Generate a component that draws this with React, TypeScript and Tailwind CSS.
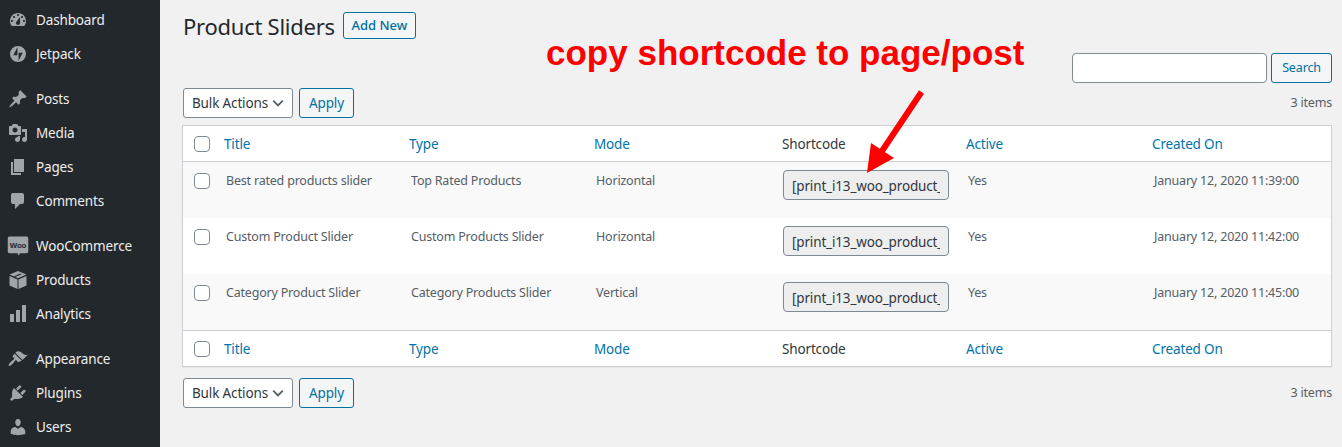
const FONT = "font-['Noto_Sans',sans-serif]"

const ICONS: Record<string, string> = {
  dashboard:
    'M3.76 16h12.48c1.1-1.37 1.76-3.11 1.76-5 0-4.42-3.58-8-8-8s-8 3.58-8 8c0 1.89.66 3.63 1.76 5zM10 4c.55 0 1 .45 1 1s-.45 1-1 1-1-.45-1-1 .45-1 1-1zM6 6c.55 0 1 .45 1 1s-.45 1-1 1-1-.45-1-1 .45-1 1-1zm8 0c.55 0 1 .45 1 1s-.45 1-1 1-1-.45-1-1 .45-1 1-1zm-5.37 5.55L12 7v6c0 1.1-.9 2-2 2s-2-.9-2-2c0-.57.24-1.08.63-1.45zM4 10c.55 0 1 .45 1 1s-.45 1-1 1-1-.45-1-1 .45-1 1-1zm12 0c.55 0 1 .45 1 1s-.45 1-1 1-1-.45-1-1 .45-1 1-1z',
  jetpack:
    'M10 2a8 8 0 1 0 0 16 8 8 0 0 0 0-16zM9.4 11.2H5.3l4.1-7.9v7.9zm1.2 5.5V8.8h4.1l-4.1 7.9z',
  posts:
    'M10.44 3.02l1.82-1.82 6.36 6.35-1.83 1.82c-1.05-.68-2.48-.57-3.41.36l-.75.75c-.92.93-1.04 2.35-.35 3.41l-1.83 1.82-2.41-2.41-2.8 2.79c-.42.42-3.38 2.71-3.8 2.29s1.86-3.39 2.28-3.81l2.79-2.79L4.1 9.36l1.83-1.82c1.05.69 2.48.57 3.41-.36l.75-.75c.93-.92 1.04-2.35.35-3.41z',
  media:
    'M13 11V4c0-.55-.45-1-1-1h-1.67L9 1H5L3.67 3H2c-.55 0-1 .45-1 1v7c0 .55.45 1 1 1h10c.55 0 1-.45 1-1zM7 4.5c1.38 0 2.5 1.12 2.5 2.5S8.38 9.5 7 9.5 4.5 8.38 4.5 7 5.62 4.5 7 4.5zM14 6h5v10.5c0 1.38-1.12 2.5-2.5 2.5S14 17.88 14 16.5s1.12-2.5 2.5-2.5c.17 0 .34.02.5.05V9h-3V6zm-4 8.05V13h2v3.5c0 1.38-1.12 2.5-2.5 2.5S7 17.88 7 16.5 8.12 14 9.5 14c.17 0 .34.02.5.05z',
  pages: 'M6 15V2h10v13H6zm-1 1h8v2H3V5h2v11z',
  comments:
    'M5 2h9c1.1 0 2 .9 2 2v7c0 1.1-.9 2-2 2h-2l-5 5v-5H5c-1.1 0-2-.9-2-2V4c0-1.1.9-2 2-2z',
  products:
    'M10 1l8.5 3.6L10 8.3 7.2 7.1l6.3-2.9-1.3-.6-6.3 2.9-4.4-1.9L10 1zM1.5 6l8 3.5V19l-8-3.6V6zm17 0v9.4l-8 3.6V9.5l8-3.5z',
  analytics: 'M2 10h4v8H2v-8zm6-4h4v12H8V6zm6-5h4v17h-4V1z',
  appearance:
    'M14.48 11.06L7.41 3.99l1.5-1.5c.5-.56 2.3-.47 3.51.32 1.21.8 1.43 1.28 2.91 2.1 1.18.64 2.45 1.26 4.45.85zm-.71.71L6.7 4.7 4.93 6.47c-.39.39-.39 1.02 0 1.41l1.06 1.06c.39.39.39 1.03 0 1.42-.6.6-1.43 1.11-2.21 1.69-.35.26-.7.53-1.01.84-1.43 1.43-2.6 3.1-1.9 3.8s2.37-.47 3.8-1.9c.31-.31.58-.66.84-1.01.58-.78 1.09-1.61 1.69-2.21.39-.39 1.03-.39 1.42 0l1.06 1.06c.39.39 1.02.39 1.41 0z',
  plugins:
    'M13.11 4.36L9.87 7.6 8 5.73l3.24-3.24c.35-.34 1.05-.2 1.56.32.52.51.66 1.21.31 1.55zm-8 1.77l.91-1.12 9.01 9.01-1.19.84c-.71.71-2.63 1.16-3.82 1.16H6.14L4.9 17.26c-.59.59-1.54.59-2.12 0-.59-.58-.59-1.53 0-2.12l1.24-1.24v-3.88c0-1.13.4-3.19 1.09-3.89zm7.26 3.97l3.24-3.24c.34-.35 1.04-.21 1.55.31.52.51.66 1.21.31 1.55l-3.24 3.25z',
  users:
    'M10 9.25c-2.27 0-2.73-3.44-2.73-3.44C7 4.02 7.82 2 9.97 2c2.16 0 2.98 2.02 2.71 3.81 0 0-.41 3.44-2.68 3.44zm0 2.57L12.72 10c2.39 0 4.52 2.33 4.52 4.53v2.49s-3.65 1.13-7.24 1.13c-3.65 0-7.24-1.13-7.24-1.13v-2.49c0-2.25 1.94-4.48 4.47-4.48z',
}

const MENU = [
  [
    ['dashboard', 'Dashboard'],
    ['jetpack', 'Jetpack'],
  ],
  [
    ['posts', 'Posts'],
    ['media', 'Media'],
    ['pages', 'Pages'],
    ['comments', 'Comments'],
  ],
  [
    ['woo', 'WooCommerce'],
    ['products', 'Products'],
    ['analytics', 'Analytics'],
  ],
  [
    ['appearance', 'Appearance'],
    ['plugins', 'Plugins'],
    ['users', 'Users'],
  ],
]

const ROWS = [
  ['Best rated products slider', 'Top Rated Products', 'Horizontal', 'January 12, 2020 11:39:00'],
  ['Custom Product Slider', 'Custom Products Slider', 'Horizontal', 'January 12, 2020 11:42:00'],
  ['Category Product Slider', 'Category Products Slider', 'Vertical', 'January 12, 2020 11:45:00'],
]

const GRID = 'grid grid-cols-[31px_185px_185px_188px_184px_186px_1fr]'

function MenuIcon({ name }: { name: string }) {
  if (name === 'woo') {
    return (
      <svg viewBox="0 0 20 20" className="h-5 w-5 shrink-0 scale-[1.05]">
        <path d="M2 1h16a2 2 0 0 1 2 2v12a2 2 0 0 1-2 2h-6l-1.5 2-1-2H2a2 2 0 0 1-2-2V3a2 2 0 0 1 2-2z" fill="#a0a5aa" />
        <text x="10" y="11.5" textAnchor="middle" fontSize="7.5" fontWeight="700" fill="#23282d" fontFamily="Liberation Sans, sans-serif">
          Woo
        </text>
      </svg>
    )
  }
  return (
    <svg viewBox="0 0 20 20" className="h-5 w-5 shrink-0 fill-[#a0a5aa]">
      <path d={ICONS[name]} fillRule={name === 'jetpack' ? 'evenodd' : undefined} />
    </svg>
  )
}

function Sidebar() {
  return (
    <aside className="flex h-[447px] w-[160px] shrink-0 flex-col gap-[11px] overflow-hidden bg-[#23282d] pt-[3px]">
      {MENU.map((group, i) => (
        <div key={i}>
          {group.map(([icon, label]) => (
            <div key={label} className="flex h-[34px] items-center gap-[8px] pl-[8px] text-[13.5px] tracking-[-0.15px] text-[#eeeeee]">
              <MenuIcon name={icon} />
              <span>{label}</span>
            </div>
          ))}
        </div>
      ))}
    </aside>
  )
}

function Checkbox() {
  return <span className="block h-4 w-4 rounded-[4px] border border-[#7e8993] bg-white" />
}

function BulkBar() {
  return (
    <div className="ml-px flex items-center gap-[6px]">
      <div className="flex h-[30px] w-[110px] items-center justify-between rounded-[3px] border border-[#7e8993] bg-white pl-[8px] pr-[6px] text-[13.5px] tracking-[-0.15px] whitespace-nowrap text-[#32373c]">
        <span>Bulk Actions</span>
        <svg viewBox="0 0 20 20" className="h-4 w-4 fill-none stroke-[#555d66] stroke-[2.2]">
          <path d="M4 7l6 6 6-6" />
        </svg>
      </div>
      <div className="flex h-[30px] w-[55px] items-center justify-center rounded-[3px] border border-[#0071a1] bg-[#f3f5f6] text-[13.5px] tracking-[-0.15px] text-[#0071a1]">
        Apply
      </div>
    </div>
  )
}

function HeadRow({ className }: { className: string }) {
  const link = 'pl-[10px] pt-px text-[#0073aa]'
  return (
    <div className={`${GRID} h-[36px] items-center bg-white text-[13.5px] tracking-[-0.15px] ${className}`}>
      <div className="pl-[11px]">
        <Checkbox />
      </div>
      <div className={link}>Title</div>
      <div className={link}>Type</div>
      <div className={link}>Mode</div>
      <div className="pl-[10px] pt-px text-[#32373c]">Shortcode</div>
      <div className={link}>Active</div>
      <div className={link}>Created On</div>
    </div>
  )
}

export default function App() {
  return (
    <div className={`relative flex h-[447px] w-[1342px] overflow-hidden bg-[#f1f1f1] ${FONT}`}>
      <Sidebar />
      <main className="min-w-0 flex-1 pl-[22px] pr-[10px]">
        <div className="flex h-[53px] items-center gap-[8px]">
          <h1 className="mb-[2px] pl-px text-[22px] leading-none tracking-[-0.25px] text-[#23282d]">Product Sliders</h1>
          <div className="mb-[2px] flex h-[27px] w-[73px] items-center justify-center rounded-[3px] border border-[#0071a1] bg-[#f3f5f6] text-[13px] font-medium text-[#0071a1]">
            Add New
          </div>
        </div>
        <div className="flex h-[30px] justify-end gap-[4px]">
          <div className="h-[30px] w-[195px] rounded-[4px] border border-[#7e8993] bg-white" />
          <div className="flex h-[30px] w-[61px] items-center justify-center rounded-[3px] border border-[#0071a1] bg-[#f3f5f6] pt-px text-[12.5px] tracking-[-0.15px] text-[#0071a1]">
            Search
          </div>
        </div>
        <div className="mt-[4px] flex h-[32px] items-center justify-between">
          <BulkBar />
          <span className="text-[12.5px] tracking-[-0.2px] text-[#555d66]">3 items</span>
        </div>
        <div className="mt-[6px] border border-[#ccd0d4] bg-white shadow-[0_1px_1px_rgba(0,0,0,0.04)]">
          <HeadRow className="border-b border-[#ccd0d4]" />
          {ROWS.map((row, i) => (
            <div
              key={row[0]}
              className={`${GRID} h-[56px] text-[12.5px] tracking-[-0.2px] text-[#555d66] ${i % 2 === 0 ? 'bg-[#f9f9f9]' : 'bg-white'}`}
            >
              <div className="pl-[11px] pt-[11px]">
                <Checkbox />
              </div>
              <div className="pl-[12px] pt-[10px]">{row[0]}</div>
              <div className="pl-[12px] pt-[10px]">{row[1]}</div>
              <div className="pl-[12px] pt-[10px]">{row[2]}</div>
              <div className="pl-[11px] pt-[8px]">
                <input
                  readOnly
                  value='[print_i13_woo_product_slider id="1"]'
                  className="h-[30px] w-[166px] rounded-[4px] border border-[#7e8993] bg-[#eeeeee] px-[8px] pt-px text-[13.5px] tracking-[-0.15px] text-[#32373c] outline-none"
                />
              </div>
              <div className="pl-[12px] pt-[10px]">Yes</div>
              <div className="pl-[12px] pt-[10px]">{row[3]}</div>
            </div>
          ))}
          <HeadRow className="border-t border-[#ccd0d4]" />
        </div>
        <div className="mt-[10px] flex h-[32px] items-center justify-between">
          <BulkBar />
          <span className="text-[12.5px] tracking-[-0.2px] text-[#555d66]">3 items</span>
        </div>
      </main>

      {/* annotation pasted over the screenshot */}
      <div className="absolute left-[546px] top-[33px] font-['Liberation_Sans',sans-serif] text-[35px] font-bold leading-[40px] whitespace-nowrap text-[#ff0000]">
        copy shortcode to page/post
      </div>
      <svg viewBox="0 0 70 90" className="absolute left-[860px] top-[86px] h-[90px] w-[70px]">
        <path d="M61.5 6L22 65" stroke="#ff0000" strokeWidth="6" fill="none" />
        <path d="M7 87L11 57L34 72Z" fill="#ff0000" />
      </svg>
    </div>
  )
}
